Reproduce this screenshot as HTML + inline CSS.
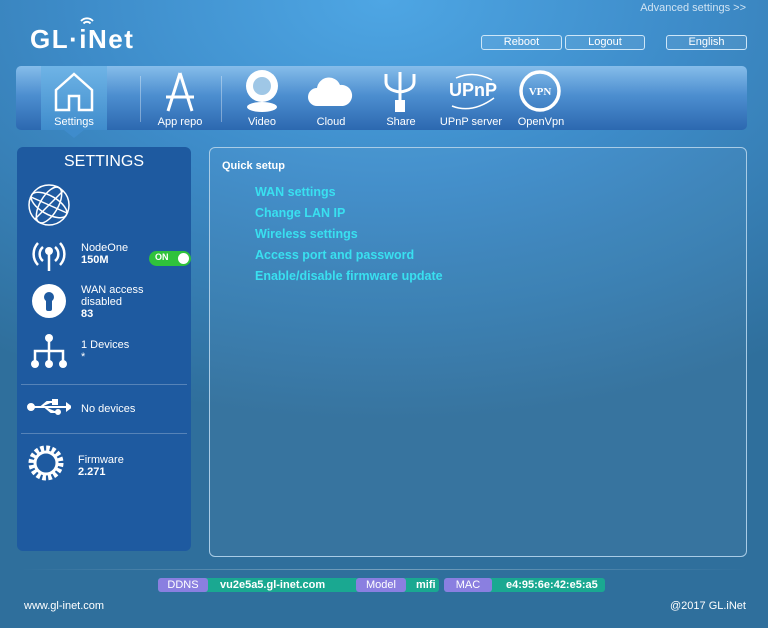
<!DOCTYPE html><html><head><style>
*{margin:0;padding:0;box-sizing:border-box}
body{width:768px;height:628px;overflow:hidden;font-family:"Liberation Sans",sans-serif;position:relative;
background:radial-gradient(ellipse 700px 420px at 384px 0px,#4ea6e4 0%,#3d8bc8 45%,#2f6f9c 100%);background-color:#2d6688}
.a{position:absolute}
.btn{position:absolute;top:35px;height:15px;border:1px solid #cde6f8;border-radius:3px;color:#fff;font-size:11px;text-align:center;line-height:13px;background:rgba(255,255,255,.08)}
.nav{left:16px;top:66px;width:731px;height:64px;border-radius:5px;background:linear-gradient(#86bdea,#4d8fd0 45%,#2c68b0)}
.it{position:absolute;top:50px;color:#fff;font-size:11px;text-align:center;width:80px}
.side{left:17px;top:147px;width:174px;height:404px;background:#1e5aa0;border-radius:6px}
.t{color:#fff;font-size:11px;position:absolute;line-height:12px}
.main{left:209px;top:147px;width:538px;height:410px;border:1px solid #a9cce6;border-radius:6px;background:rgba(255,255,255,.04)}
.lk{position:absolute;left:45px;color:#39e0f0;font-weight:bold;font-size:12.5px}
.bd{position:absolute;top:578px;height:14px;font-size:11px;line-height:14px;color:#fff;border-radius:3px}
</style></head><body>
<div class="a" style="right:22px;top:2px;color:#cfe3f3;font-size:11px">Advanced settings &gt;&gt;</div>
<div class="a" style="left:30px;top:24px;color:#fff;font-size:26px;font-weight:bold;letter-spacing:1.5px">GL·iNet</div>
<svg class="a" style="left:79px;top:15px" width="16" height="12"><path d="M2 6a8 8 0 0 1 12 0M4.5 8.5a4.5 4.5 0 0 1 7 0" stroke="#fff" stroke-width="1.8" fill="none"/></svg>
<div class="btn" style="left:481px;width:81px">Reboot</div>
<div class="btn" style="left:565px;width:80px">Logout</div>
<div class="btn" style="left:666px;width:81px">English</div>
<div class="a nav">
<div class="a" style="left:25px;top:0;width:66px;height:64px;background:linear-gradient(#6fb4e6,#3f8ccc)"></div>
<div class="a" style="left:48px;top:64px;width:0;height:0;border-left:10px solid transparent;border-right:10px solid transparent;border-top:8px solid #3f8ccc"></div>
<div class="a" style="left:124px;top:10px;width:1px;height:46px;background:rgba(255,255,255,.35)"></div>
<div class="a" style="left:205px;top:10px;width:1px;height:46px;background:rgba(255,255,255,.35)"></div>
<svg class="a" style="left:36px;top:4px" width="44" height="44"><path d="M4 20L22 4L40 20V40H27V26H17V40H4Z" stroke="#fff" stroke-width="2.5" fill="none"/></svg>
<svg class="a" style="left:146px;top:5px" width="36" height="42"><path d="M18 2L6 40M18 2L30 40M4 26H32" stroke="#fff" stroke-width="3" fill="none"/></svg>
<svg class="a" style="left:228px;top:2px" width="36" height="46"><circle cx="18" cy="18" r="16" fill="#fff"/><circle cx="18" cy="18" r="9" fill="#9fc7e6"/><ellipse cx="18" cy="39" rx="15" ry="5" fill="#fff"/></svg>
<svg class="a" style="left:291px;top:8px" width="46" height="34"><path d="M10 32a9 9 0 0 1 0-18a12 12 0 0 1 23-3a10 10 0 0 1 3 21Z" fill="#fff"/></svg>
<svg class="a" style="left:364px;top:2px" width="40" height="46"><path d="M20 8V36M6 6v8q0 8 14 10q14-2 14-10V6M20 4v4" stroke="#fff" stroke-width="3" fill="none"/><rect x="15" y="32" width="10" height="12" fill="#fff"/></svg>
<svg class="a" style="left:428px;top:4px" width="56" height="42"><path d="M8 36q20 8 42-8M12 8q18-8 36 2" stroke="#fff" stroke-width="1.5" fill="none"/></svg>
<div class="a" style="left:433px;top:14px;color:#fff;font-weight:bold;font-size:18px">UPnP</div>
<svg class="a" style="left:502px;top:3px" width="44" height="44"><circle cx="22" cy="22" r="19" stroke="#fff" stroke-width="3.5" fill="none"/><text x="22" y="26" text-anchor="middle" fill="#fff" font-size="11" font-weight="bold" font-family="Liberation Serif">VPN</text></svg>
<div class="it" style="left:18px">Settings</div>
<div class="it" style="left:124px">App repo</div>
<div class="it" style="left:206px">Video</div>
<div class="it" style="left:275px">Cloud</div>
<div class="it" style="left:345px">Share</div>
<div class="it" style="left:415px">UPnP server</div>
<div class="it" style="left:485px">OpenVpn</div>
</div>
<div class="a side">
<div class="a" style="left:0;width:174px;top:6px;text-align:center;color:#fff;font-size:16px">SETTINGS</div>
<svg class="a" style="left:10px;top:36px" width="44" height="44"><g stroke="#fff" stroke-width="1.5" fill="none"><circle cx="22" cy="22" r="20"/><ellipse cx="22" cy="22" rx="9" ry="20" transform="rotate(30 22 22)"/><ellipse cx="22" cy="22" rx="20" ry="9" transform="rotate(30 22 22)"/><path d="M4 14L40 30M8 36L36 8"/></g></svg>
<svg class="a" style="left:12px;top:90px" width="40" height="36"><g stroke="#fff" stroke-width="2.5" fill="none"><path d="M9 6a16 16 0 0 0 0 22M31 6a16 16 0 0 1 0 22M14 10a9 9 0 0 0 0 14M26 10a9 9 0 0 1 0 14M20 16V34"/></g><circle cx="20" cy="14" r="4" fill="#fff"/></svg>
<div class="t" style="left:64px;top:95px">NodeOne<br><b>150M</b></div>
<div class="a" style="left:132px;top:104px;width:42px;height:15px;border-radius:8px;background:#2fc23c"><span style="position:absolute;left:6px;top:1px;color:#fff;font-size:9px;font-weight:bold">ON</span><span style="position:absolute;right:2px;top:2px;width:11px;height:11px;border-radius:50%;background:#fff"></span></div>
<svg class="a" style="left:14px;top:136px" width="36" height="36"><circle cx="18" cy="18" r="17" fill="#fff"/><circle cx="18" cy="14" r="5" fill="#1e5aa0"/><rect x="15" y="14" width="6" height="14" rx="2" fill="#1e5aa0"/></svg>
<div class="t" style="left:64px;top:137px">WAN access<br>disabled<br><b>83</b></div>
<svg class="a" style="left:12px;top:186px" width="40" height="36"><g stroke="#fff" stroke-width="2.5" fill="none"><path d="M20 6V18M6 30V18H34V30M20 18V30"/></g><circle cx="20" cy="5" r="4" fill="#fff"/><circle cx="6" cy="31" r="4" fill="#fff"/><circle cx="20" cy="31" r="4" fill="#fff"/><circle cx="34" cy="31" r="4" fill="#fff"/></svg>
<div class="t" style="left:64px;top:192px">1 Devices<br>*</div>
<div class="a" style="left:4px;top:237px;width:166px;height:1px;background:rgba(255,255,255,.25)"></div>
<svg class="a" style="left:10px;top:252px" width="44" height="16"><g stroke="#fff" stroke-width="2" fill="#fff"><path d="M4 8H40M14 8L20 3H26M18 8L24 13H30"/><circle cx="4" cy="8" r="3"/><rect x="26" y="1" width="4" height="4"/><circle cx="31" cy="13" r="2"/><path d="M40 5V11L44 8Z"/></g></svg>
<div class="t" style="left:64px;top:256px">No devices</div>
<div class="a" style="left:4px;top:286px;width:166px;height:1px;background:rgba(255,255,255,.25)"></div>
<svg class="a" style="left:10px;top:297px" width="38" height="38"><circle cx="19" cy="19" r="14.5" stroke="#fff" stroke-width="6" stroke-dasharray="3.5 2.2" fill="none"/><circle cx="19" cy="19" r="11" stroke="#fff" stroke-width="3" fill="none"/></svg>
<div class="t" style="left:61px;top:307px">Firmware<br><b>2.271</b></div>
</div>
<div class="a main">
<div class="a" style="left:12px;top:12px;color:#fff;font-size:11px;font-weight:bold">Quick setup</div>
<div class="lk" style="top:37px">WAN settings</div>
<div class="lk" style="top:58px">Change LAN IP</div>
<div class="lk" style="top:79px">Wireless settings</div>
<div class="lk" style="top:100px">Access port and password</div>
<div class="lk" style="top:121px">Enable/disable firmware update</div>
</div>
<div class="a" style="left:20px;top:569px;width:728px;height:1px;background:linear-gradient(90deg,rgba(255,255,255,0),rgba(255,255,255,.35),rgba(255,255,255,0))"></div>
<div class="bd" style="left:158px;width:201px;background:#1aa891"><span style="display:inline-block;width:50px;background:#8a7fe0;border-radius:3px;text-align:center">DDNS</span><b style="margin-left:12px">vu2e5a5.gl-inet.com</b></div>
<div class="bd" style="left:356px;width:83px;background:#1aa891"><span style="display:inline-block;width:50px;background:#8a7fe0;border-radius:3px;text-align:center">Model</span><b style="margin-left:10px">mifi</b></div>
<div class="bd" style="left:444px;width:161px;background:#1aa891"><span style="display:inline-block;width:48px;background:#8a7fe0;border-radius:3px;text-align:center">MAC</span><b style="margin-left:14px">e4:95:6e:42:e5:a5</b></div>
<div class="a" style="left:24px;top:600px;color:#fff;font-size:11px">www.gl-inet.com</div>
<div class="a" style="right:22px;top:600px;color:#fff;font-size:11px">@2017 GL.iNet</div>
</body></html>
